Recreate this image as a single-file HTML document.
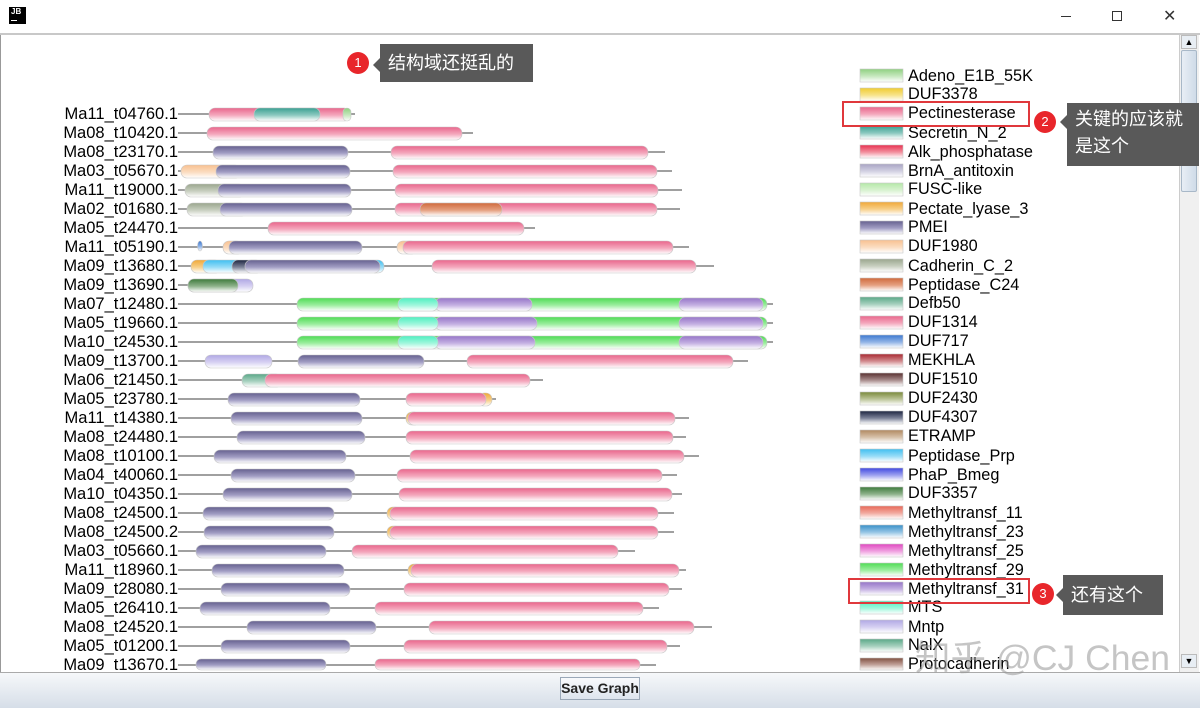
<!DOCTYPE html>
<html><head><meta charset="utf-8"><style>
body{margin:0;width:1200px;height:707px;overflow:hidden;background:#fff;font-family:"Liberation Sans","Noto Sans CJK SC",sans-serif;position:relative}
.a{position:absolute}
.lab{position:absolute;right:1022px;font-size:16.5px;color:#000;line-height:18px;white-space:nowrap}
.lg{position:absolute;left:908px;font-size:16.3px;line-height:18px;white-space:nowrap}
.box{position:absolute;background:#595959;color:#fff;font-size:18px;line-height:27px;padding:0 8px}
.circ{position:absolute;width:22px;height:22px;border-radius:50%;background:#e8262b;color:#fff;font-size:13px;text-align:center;line-height:22px}
.red{position:absolute;border:2px solid #e0383c}
</style></head><body>
<div class="a" style="left:0;top:0;width:1200px;height:33px;background:#fff;border-bottom:2px solid #c8c8c8"></div>
<div class="a" style="left:9px;top:7px;width:17px;height:17px;background:#000;color:#fff;font-size:8px;font-weight:bold;line-height:10px;text-align:left;padding-left:2px;box-sizing:border-box">JB<div style="width:6px;height:1px;background:#fff;margin-top:3px"></div></div>
<div class="a" style="left:1061px;top:16px;width:10px;height:1px;background:#333"></div>
<div class="a" style="left:1112px;top:11px;width:8px;height:8px;border:1px solid #333"></div>
<div class="a" style="left:1163px;top:6px;font-size:16px;color:#333">✕</div>
<div class="a" style="left:0;top:35px;width:1px;height:640px;background:#999"></div>
<div class="a" style="left:1179px;top:35px;width:19px;height:637px;background:#f0f0f0;border-left:1px solid #ccc"></div>
<div class="a" style="left:1181px;top:35px;width:16px;height:14px;background:#e8eef4;border:1px solid #bbb;box-sizing:border-box;font-size:9px;text-align:center;line-height:12px">▲</div>
<div class="a" style="left:1181px;top:50px;width:16px;height:142px;background:linear-gradient(90deg,#e8eef5,#cfdbe8);border:1px solid #a8b8c8;box-sizing:border-box;border-radius:2px"></div>
<div class="a" style="left:1181px;top:654px;width:16px;height:14px;background:#e8eef4;border:1px solid #bbb;box-sizing:border-box;font-size:9px;text-align:center;line-height:12px">▼</div>
<div class="a" style="left:0;top:672px;width:1200px;height:35px;background:linear-gradient(#f6f8fa,#d6dee8);border-top:1px solid #aaa"></div>
<div class="a" style="left:560px;top:677px;width:80px;height:23px;border:1px solid #9aa8b8;box-sizing:border-box;background:linear-gradient(#f8fafc,#dde5ee);font-size:14px;font-weight:bold;text-align:center;line-height:21px;color:#222">Save Graph</div>

<svg class="a" style="left:0;top:0" width="1200" height="707">
<defs>
<linearGradient id="pk" x1="0" y1="0" x2="0" y2="1"><stop offset="0" stop-color="#e9668c"/><stop offset=".55" stop-color="#f4a8bd"/><stop offset="1" stop-color="#fff"/></linearGradient>
<linearGradient id="pu" x1="0" y1="0" x2="0" y2="1"><stop offset="0" stop-color="#65608f"/><stop offset=".55" stop-color="#a29ec4"/><stop offset="1" stop-color="#fff"/></linearGradient>
<linearGradient id="te" x1="0" y1="0" x2="0" y2="1"><stop offset="0" stop-color="#3a9f92"/><stop offset=".55" stop-color="#8cc9c0"/><stop offset="1" stop-color="#fff"/></linearGradient>
<linearGradient id="gr" x1="0" y1="0" x2="0" y2="1"><stop offset="0" stop-color="#4fdc55"/><stop offset=".55" stop-color="#9bee9e"/><stop offset="1" stop-color="#fff"/></linearGradient>
<linearGradient id="aq" x1="0" y1="0" x2="0" y2="1"><stop offset="0" stop-color="#4ff0c0"/><stop offset=".55" stop-color="#9ff6dc"/><stop offset="1" stop-color="#fff"/></linearGradient>
<linearGradient id="vi" x1="0" y1="0" x2="0" y2="1"><stop offset="0" stop-color="#9676c8"/><stop offset=".55" stop-color="#c4b0e2"/><stop offset="1" stop-color="#fff"/></linearGradient>
<linearGradient id="lv" x1="0" y1="0" x2="0" y2="1"><stop offset="0" stop-color="#b0a8e4"/><stop offset=".55" stop-color="#d6d0f2"/><stop offset="1" stop-color="#fff"/></linearGradient>
<linearGradient id="pe" x1="0" y1="0" x2="0" y2="1"><stop offset="0" stop-color="#f8c090"/><stop offset=".55" stop-color="#fbdcc0"/><stop offset="1" stop-color="#fff"/></linearGradient>
<linearGradient id="gg" x1="0" y1="0" x2="0" y2="1"><stop offset="0" stop-color="#9aa68e"/><stop offset=".55" stop-color="#c8cfc0"/><stop offset="1" stop-color="#fff"/></linearGradient>
<linearGradient id="or" x1="0" y1="0" x2="0" y2="1"><stop offset="0" stop-color="#f0a838"/><stop offset=".55" stop-color="#f7cf88"/><stop offset="1" stop-color="#fff"/></linearGradient>
<linearGradient id="br" x1="0" y1="0" x2="0" y2="1"><stop offset="0" stop-color="#d06a3c"/><stop offset=".55" stop-color="#e5a080"/><stop offset="1" stop-color="#fff"/></linearGradient>
<linearGradient id="dg" x1="0" y1="0" x2="0" y2="1"><stop offset="0" stop-color="#3e7a3c"/><stop offset=".55" stop-color="#8db28a"/><stop offset="1" stop-color="#fff"/></linearGradient>
<linearGradient id="lb" x1="0" y1="0" x2="0" y2="1"><stop offset="0" stop-color="#40bff0"/><stop offset=".55" stop-color="#96dcf7"/><stop offset="1" stop-color="#fff"/></linearGradient>
<linearGradient id="dk" x1="0" y1="0" x2="0" y2="1"><stop offset="0" stop-color="#1c2440"/><stop offset=".55" stop-color="#7c8298"/><stop offset="1" stop-color="#fff"/></linearGradient>
<linearGradient id="mi" x1="0" y1="0" x2="0" y2="1"><stop offset="0" stop-color="#5aa888"/><stop offset=".55" stop-color="#a6d0be"/><stop offset="1" stop-color="#fff"/></linearGradient>
<linearGradient id="lg" x1="0" y1="0" x2="0" y2="1"><stop offset="0" stop-color="#8fd080"/><stop offset=".55" stop-color="#c6e8be"/><stop offset="1" stop-color="#fff"/></linearGradient>
<linearGradient id="ye" x1="0" y1="0" x2="0" y2="1"><stop offset="0" stop-color="#f0cc30"/><stop offset=".55" stop-color="#f7e38a"/><stop offset="1" stop-color="#fff"/></linearGradient>
<linearGradient id="rd" x1="0" y1="0" x2="0" y2="1"><stop offset="0" stop-color="#e83050"/><stop offset=".55" stop-color="#f2909e"/><stop offset="1" stop-color="#fff"/></linearGradient>
<linearGradient id="bg" x1="0" y1="0" x2="0" y2="1"><stop offset="0" stop-color="#a8a4c4"/><stop offset=".55" stop-color="#d2d0e2"/><stop offset="1" stop-color="#fff"/></linearGradient>
<linearGradient id="fl" x1="0" y1="0" x2="0" y2="1"><stop offset="0" stop-color="#b4e8a8"/><stop offset=".55" stop-color="#d8f2d0"/><stop offset="1" stop-color="#fff"/></linearGradient>
<linearGradient id="bl" x1="0" y1="0" x2="0" y2="1"><stop offset="0" stop-color="#3c78d0"/><stop offset=".55" stop-color="#92b4e6"/><stop offset="1" stop-color="#fff"/></linearGradient>
<linearGradient id="mk" x1="0" y1="0" x2="0" y2="1"><stop offset="0" stop-color="#a82830"/><stop offset=".55" stop-color="#d28a8e"/><stop offset="1" stop-color="#fff"/></linearGradient>
<linearGradient id="d15" x1="0" y1="0" x2="0" y2="1"><stop offset="0" stop-color="#583030"/><stop offset=".55" stop-color="#a88c8c"/><stop offset="1" stop-color="#fff"/></linearGradient>
<linearGradient id="ol" x1="0" y1="0" x2="0" y2="1"><stop offset="0" stop-color="#7a8a3a"/><stop offset=".55" stop-color="#bcc498"/><stop offset="1" stop-color="#fff"/></linearGradient>
<linearGradient id="et" x1="0" y1="0" x2="0" y2="1"><stop offset="0" stop-color="#b08860"/><stop offset=".55" stop-color="#d6c0a8"/><stop offset="1" stop-color="#fff"/></linearGradient>
<linearGradient id="ph" x1="0" y1="0" x2="0" y2="1"><stop offset="0" stop-color="#4048e0"/><stop offset=".55" stop-color="#9ca0f0"/><stop offset="1" stop-color="#fff"/></linearGradient>
<linearGradient id="m11" x1="0" y1="0" x2="0" y2="1"><stop offset="0" stop-color="#e86858"/><stop offset=".55" stop-color="#f2aaa0"/><stop offset="1" stop-color="#fff"/></linearGradient>
<linearGradient id="m23" x1="0" y1="0" x2="0" y2="1"><stop offset="0" stop-color="#3890c8"/><stop offset=".55" stop-color="#94c4e4"/><stop offset="1" stop-color="#fff"/></linearGradient>
<linearGradient id="m25" x1="0" y1="0" x2="0" y2="1"><stop offset="0" stop-color="#e048c0"/><stop offset=".55" stop-color="#f0a0e0"/><stop offset="1" stop-color="#fff"/></linearGradient>
<linearGradient id="pc" x1="0" y1="0" x2="0" y2="1"><stop offset="0" stop-color="#805040"/><stop offset=".55" stop-color="#c0a098"/><stop offset="1" stop-color="#fff"/></linearGradient>
</defs>
<g stroke="#808080" stroke-width="1.5">
<line x1="178" y1="114" x2="355" y2="114"/><line x1="178" y1="133" x2="473" y2="133"/><line x1="178" y1="152" x2="665" y2="152"/><line x1="178" y1="171" x2="672" y2="171"/><line x1="178" y1="190" x2="682" y2="190"/><line x1="178" y1="209" x2="680" y2="209"/><line x1="178" y1="228" x2="535" y2="228"/><line x1="178" y1="247" x2="689" y2="247"/><line x1="178" y1="266" x2="714" y2="266"/><line x1="178" y1="285" x2="253" y2="285"/><line x1="178" y1="304" x2="773" y2="304"/><line x1="178" y1="323" x2="773" y2="323"/><line x1="178" y1="342" x2="773" y2="342"/><line x1="178" y1="361" x2="748" y2="361"/><line x1="178" y1="380" x2="543" y2="380"/><line x1="178" y1="399" x2="496" y2="399"/><line x1="178" y1="418" x2="689" y2="418"/><line x1="178" y1="437" x2="686" y2="437"/><line x1="178" y1="456" x2="699" y2="456"/><line x1="178" y1="475" x2="677" y2="475"/><line x1="178" y1="494" x2="682" y2="494"/><line x1="178" y1="513" x2="674" y2="513"/><line x1="178" y1="532" x2="674" y2="532"/><line x1="178" y1="551" x2="635" y2="551"/><line x1="178" y1="570" x2="686" y2="570"/><line x1="178" y1="589" x2="682" y2="589"/><line x1="178" y1="608" x2="659" y2="608"/><line x1="178" y1="627" x2="712" y2="627"/><line x1="178" y1="646" x2="680" y2="646"/><line x1="178" y1="665" x2="656" y2="665"/>
</g>
<g stroke="#c8c8c8" stroke-width=".6">
<rect x="209" y="108" width="141" height="13" rx="6" fill="url(#pk)"/><rect x="254" y="108" width="66" height="13" rx="6" fill="url(#te)"/><rect x="343" y="108" width="8" height="13" rx="4" fill="url(#lg)"/>
<rect x="207" y="127" width="255" height="13" rx="6" fill="url(#pk)"/>
<rect x="213" y="146" width="135" height="13" rx="6" fill="url(#pu)"/><rect x="391" y="146" width="257" height="13" rx="6" fill="url(#pk)"/>
<rect x="181" y="165" width="60" height="13" rx="6" fill="url(#pe)"/><rect x="216" y="165" width="134" height="13" rx="6" fill="url(#pu)"/><rect x="393" y="165" width="264" height="13" rx="6" fill="url(#pk)"/>
<rect x="185" y="184" width="60" height="13" rx="6" fill="url(#gg)"/><rect x="218" y="184" width="133" height="13" rx="6" fill="url(#pu)"/><rect x="395" y="184" width="263" height="13" rx="6" fill="url(#pk)"/>
<rect x="187" y="203" width="60" height="13" rx="6" fill="url(#gg)"/><rect x="220" y="203" width="132" height="13" rx="6" fill="url(#pu)"/><rect x="395" y="203" width="262" height="13" rx="6" fill="url(#pk)"/><rect x="420" y="203" width="82" height="13" rx="6" fill="url(#br)"/>
<rect x="268" y="222" width="256" height="13" rx="6" fill="url(#pk)"/>
<ellipse cx="200" cy="246" rx="2.5" ry="5" fill="url(#bl)"/><rect x="223" y="241" width="20" height="13" rx="6" fill="url(#pe)"/><rect x="229" y="241" width="133" height="13" rx="6" fill="url(#pu)"/><rect x="397" y="241" width="20" height="13" rx="6" fill="url(#pe)"/><rect x="403" y="241" width="270" height="13" rx="6" fill="url(#pk)"/>
<rect x="191" y="260" width="30" height="13" rx="6" fill="url(#or)"/><rect x="203" y="260" width="40" height="13" rx="6" fill="url(#lb)"/><rect x="232" y="260" width="30" height="13" rx="6" fill="url(#dk)"/><rect x="370" y="260" width="14" height="13" rx="6" fill="url(#lb)"/><rect x="245" y="260" width="135" height="13" rx="6" fill="url(#pu)"/><rect x="432" y="260" width="264" height="13" rx="6" fill="url(#pk)"/>
<rect x="188" y="279" width="65" height="13" rx="6" fill="url(#lv)"/><rect x="188" y="279" width="50" height="13" rx="6" fill="url(#dg)"/>
<rect x="297" y="298" width="470" height="13" rx="6" fill="url(#gr)"/><rect x="679" y="298" width="84" height="13" rx="6" fill="url(#vi)"/><rect x="435" y="298" width="97" height="13" rx="6" fill="url(#vi)"/><rect x="398" y="298" width="40" height="13" rx="6" fill="url(#aq)"/>
<rect x="297" y="317" width="470" height="13" rx="6" fill="url(#gr)"/><rect x="679" y="317" width="84" height="13" rx="6" fill="url(#vi)"/><rect x="435" y="317" width="102" height="13" rx="6" fill="url(#vi)"/><rect x="398" y="317" width="40" height="13" rx="6" fill="url(#aq)"/>
<rect x="297" y="336" width="470" height="13" rx="6" fill="url(#gr)"/><rect x="679" y="336" width="84" height="13" rx="6" fill="url(#vi)"/><rect x="435" y="336" width="100" height="13" rx="6" fill="url(#vi)"/><rect x="398" y="336" width="40" height="13" rx="6" fill="url(#aq)"/>
<rect x="205" y="355" width="67" height="13" rx="6" fill="url(#lv)"/><rect x="298" y="355" width="126" height="13" rx="6" fill="url(#pu)"/><rect x="467" y="355" width="266" height="13" rx="6" fill="url(#pk)"/>
<rect x="242" y="374" width="40" height="13" rx="6" fill="url(#mi)"/><rect x="265" y="374" width="265" height="13" rx="6" fill="url(#pk)"/>
<rect x="228" y="393" width="132" height="13" rx="6" fill="url(#pu)"/><rect x="478" y="393" width="14" height="13" rx="6" fill="url(#or)"/><rect x="406" y="393" width="80" height="13" rx="6" fill="url(#pk)"/>
<rect x="231" y="412" width="131" height="13" rx="6" fill="url(#pu)"/><rect x="406" y="412" width="14" height="13" rx="6" fill="url(#or)"/><rect x="408" y="412" width="267" height="13" rx="6" fill="url(#pk)"/>
<rect x="237" y="431" width="128" height="13" rx="6" fill="url(#pu)"/><rect x="406" y="431" width="267" height="13" rx="6" fill="url(#pk)"/>
<rect x="214" y="450" width="132" height="13" rx="6" fill="url(#pu)"/><rect x="410" y="450" width="274" height="13" rx="6" fill="url(#pk)"/>
<rect x="231" y="469" width="124" height="13" rx="6" fill="url(#pu)"/><rect x="397" y="469" width="265" height="13" rx="6" fill="url(#pk)"/>
<rect x="223" y="488" width="129" height="13" rx="6" fill="url(#pu)"/><rect x="399" y="488" width="273" height="13" rx="6" fill="url(#pk)"/>
<rect x="203" y="507" width="131" height="13" rx="6" fill="url(#pu)"/><rect x="387" y="507" width="14" height="13" rx="6" fill="url(#or)"/><rect x="390" y="507" width="268" height="13" rx="6" fill="url(#pk)"/>
<rect x="204" y="526" width="130" height="13" rx="6" fill="url(#pu)"/><rect x="387" y="526" width="14" height="13" rx="6" fill="url(#or)"/><rect x="390" y="526" width="268" height="13" rx="6" fill="url(#pk)"/>
<rect x="196" y="545" width="130" height="13" rx="6" fill="url(#pu)"/><rect x="352" y="545" width="266" height="13" rx="6" fill="url(#pk)"/>
<rect x="212" y="564" width="132" height="13" rx="6" fill="url(#pu)"/><rect x="408" y="564" width="14" height="13" rx="6" fill="url(#or)"/><rect x="411" y="564" width="268" height="13" rx="6" fill="url(#pk)"/>
<rect x="221" y="583" width="129" height="13" rx="6" fill="url(#pu)"/><rect x="404" y="583" width="265" height="13" rx="6" fill="url(#pk)"/>
<rect x="200" y="602" width="130" height="13" rx="6" fill="url(#pu)"/><rect x="375" y="602" width="268" height="13" rx="6" fill="url(#pk)"/>
<rect x="247" y="621" width="129" height="13" rx="6" fill="url(#pu)"/><rect x="429" y="621" width="265" height="13" rx="6" fill="url(#pk)"/>
<rect x="221" y="640" width="129" height="13" rx="6" fill="url(#pu)"/><rect x="404" y="640" width="263" height="13" rx="6" fill="url(#pk)"/>
<rect x="196" y="659" width="130" height="11" rx="5" fill="url(#pu)"/><rect x="375" y="659" width="265" height="11" rx="5" fill="url(#pk)"/>
</g>
<g stroke="#c8c8c8" stroke-width=".6">
<rect x="860" y="69" width="43" height="13" fill="url(#lg)"/><rect x="860" y="88" width="43" height="13" fill="url(#ye)"/><rect x="860" y="107" width="43" height="13" fill="url(#pk)"/><rect x="860" y="126" width="43" height="13" fill="url(#te)"/><rect x="860" y="145" width="43" height="13" fill="url(#rd)"/><rect x="860" y="164" width="43" height="13" fill="url(#bg)"/><rect x="860" y="183" width="43" height="13" fill="url(#fl)"/><rect x="860" y="202" width="43" height="13" fill="url(#or)"/><rect x="860" y="221" width="43" height="13" fill="url(#pu)"/><rect x="860" y="240" width="43" height="13" fill="url(#pe)"/><rect x="860" y="259" width="43" height="13" fill="url(#gg)"/><rect x="860" y="278" width="43" height="13" fill="url(#br)"/><rect x="860" y="297" width="43" height="13" fill="url(#mi)"/><rect x="860" y="316" width="43" height="13" fill="url(#pk)"/><rect x="860" y="335" width="43" height="13" fill="url(#bl)"/><rect x="860" y="354" width="43" height="13" fill="url(#mk)"/><rect x="860" y="373" width="43" height="13" fill="url(#d15)"/><rect x="860" y="392" width="43" height="13" fill="url(#ol)"/><rect x="860" y="411" width="43" height="13" fill="url(#dk)"/><rect x="860" y="430" width="43" height="13" fill="url(#et)"/><rect x="860" y="449" width="43" height="13" fill="url(#lb)"/><rect x="860" y="468" width="43" height="13" fill="url(#ph)"/><rect x="860" y="487" width="43" height="13" fill="url(#dg)"/><rect x="860" y="506" width="43" height="13" fill="url(#m11)"/><rect x="860" y="525" width="43" height="13" fill="url(#m23)"/><rect x="860" y="544" width="43" height="13" fill="url(#m25)"/><rect x="860" y="563" width="43" height="13" fill="url(#gr)"/><rect x="860" y="582" width="43" height="13" fill="url(#vi)"/><rect x="860" y="601" width="43" height="13" fill="url(#aq)"/><rect x="860" y="620" width="43" height="13" fill="url(#lv)"/><rect x="860" y="639" width="43" height="13" fill="url(#mi)"/><rect x="860" y="658" width="43" height="12" fill="url(#pc)"/>
</g>
</svg>

<div class="lab" style="top:105px">Ma11_t04760.1</div><div class="lab" style="top:124px">Ma08_t10420.1</div><div class="lab" style="top:143px">Ma08_t23170.1</div><div class="lab" style="top:162px">Ma03_t05670.1</div><div class="lab" style="top:181px">Ma11_t19000.1</div><div class="lab" style="top:200px">Ma02_t01680.1</div><div class="lab" style="top:219px">Ma05_t24470.1</div><div class="lab" style="top:238px">Ma11_t05190.1</div><div class="lab" style="top:257px">Ma09_t13680.1</div><div class="lab" style="top:276px">Ma09_t13690.1</div><div class="lab" style="top:295px">Ma07_t12480.1</div><div class="lab" style="top:314px">Ma05_t19660.1</div><div class="lab" style="top:333px">Ma10_t24530.1</div><div class="lab" style="top:352px">Ma09_t13700.1</div><div class="lab" style="top:371px">Ma06_t21450.1</div><div class="lab" style="top:390px">Ma05_t23780.1</div><div class="lab" style="top:409px">Ma11_t14380.1</div><div class="lab" style="top:428px">Ma08_t24480.1</div><div class="lab" style="top:447px">Ma08_t10100.1</div><div class="lab" style="top:466px">Ma04_t40060.1</div><div class="lab" style="top:485px">Ma10_t04350.1</div><div class="lab" style="top:504px">Ma08_t24500.1</div><div class="lab" style="top:523px">Ma08_t24500.2</div><div class="lab" style="top:542px">Ma03_t05660.1</div><div class="lab" style="top:561px">Ma11_t18960.1</div><div class="lab" style="top:580px">Ma09_t28080.1</div><div class="lab" style="top:599px">Ma05_t26410.1</div><div class="lab" style="top:618px">Ma08_t24520.1</div><div class="lab" style="top:637px">Ma05_t01200.1</div><div class="lab" style="top:656px;height:16px;overflow:hidden">Ma09_t13670.1</div>

<div class="lg" style="top:67px">Adeno_E1B_55K</div><div class="lg" style="top:85px">DUF3378</div><div class="lg" style="top:104px">Pectinesterase</div><div class="lg" style="top:124px">Secretin_N_2</div><div class="lg" style="top:143px">Alk_phosphatase</div><div class="lg" style="top:162px">BrnA_antitoxin</div><div class="lg" style="top:180px">FUSC-like</div><div class="lg" style="top:200px">Pectate_lyase_3</div><div class="lg" style="top:218px">PMEI</div><div class="lg" style="top:237px">DUF1980</div><div class="lg" style="top:257px">Cadherin_C_2</div><div class="lg" style="top:276px">Peptidase_C24</div><div class="lg" style="top:294px">Defb50</div><div class="lg" style="top:313px">DUF1314</div><div class="lg" style="top:332px">DUF717</div><div class="lg" style="top:351px">MEKHLA</div><div class="lg" style="top:370px">DUF1510</div><div class="lg" style="top:389px">DUF2430</div><div class="lg" style="top:408px">DUF4307</div><div class="lg" style="top:427px">ETRAMP</div><div class="lg" style="top:447px">Peptidase_Prp</div><div class="lg" style="top:466px">PhaP_Bmeg</div><div class="lg" style="top:484px">DUF3357</div><div class="lg" style="top:504px">Methyltransf_11</div><div class="lg" style="top:523px">Methyltransf_23</div><div class="lg" style="top:542px">Methyltransf_25</div><div class="lg" style="top:561px">Methyltransf_29</div><div class="lg" style="top:580px">Methyltransf_31</div><div class="lg" style="top:598px">MTS</div><div class="lg" style="top:618px">Mntp</div><div class="lg" style="top:636px">NalX</div><div class="lg" style="top:655px;height:17px;overflow:hidden">Protocadherin</div>

<div class="circ" style="left:347px;top:52px">1</div>
<div class="box" style="left:380px;top:44px;width:137px;height:38px;line-height:38px">结构域还挺乱的</div>
<div class="a" style="left:373px;top:58px;border:7px solid transparent;border-right-color:#595959;border-left:0"></div>
<div class="red" style="left:842px;top:101px;width:184px;height:22px"></div>
<div class="circ" style="left:1034px;top:111px">2</div>
<div class="box" style="left:1067px;top:103px;width:116px;height:60px;padding:3px 8px 0;line-height:27px">关键的应该就是这个</div>
<div class="a" style="left:1060px;top:115px;border:7px solid transparent;border-right-color:#595959;border-left:0"></div>
<div class="red" style="left:848px;top:578px;width:178px;height:22px"></div>
<div class="circ" style="left:1032px;top:583px">3</div>
<div class="box" style="left:1063px;top:575px;width:84px;height:40px;line-height:40px">还有这个</div>
<div class="a" style="left:1056px;top:588px;border:7px solid transparent;border-right-color:#595959;border-left:0"></div>
<div class="a" style="left:915px;top:636px;font-size:35.5px;color:rgba(150,150,150,.55);white-space:nowrap;line-height:44px">知乎 @CJ Chen</div>
</body></html>
